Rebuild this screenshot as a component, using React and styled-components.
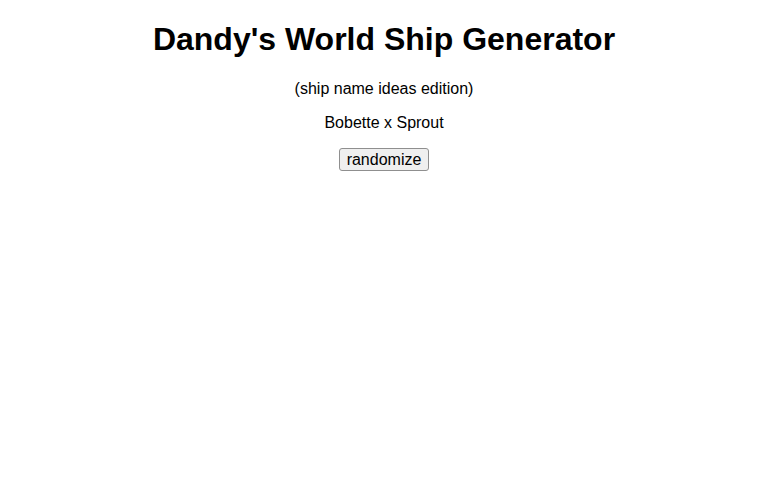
import React, { useState } from "react";
import styled, { createGlobalStyle } from "styled-components";

const Global = createGlobalStyle`
  body {
    margin: 0;
    background: #fff;
    color: #000;
    font-family: "Liberation Sans", Arial, sans-serif;
  }
`;

const Page = styled.main`
  padding: 0 8px;
  text-align: center;
`;

const Title = styled.h1`
  font-size: 32px;
  font-weight: bold;
  margin: 21.44px 0;
`;

const Line = styled.p`
  font-size: 16px;
  margin: 16px 0;
`;

const Actions = styled.div`
  text-align: center;
`;

const Button = styled.button`
  font-family: "Liberation Sans", Arial, sans-serif;
  font-size: 16px;
  line-height: 18px;
  color: #000;
  padding: 2px 7px 1px;
  background: #efefef;
  border: 1px solid #8f8f8f;
  border-radius: 3px;
  cursor: pointer;
  &:hover {
    background: #e5e5e5;
  }
`;

const characters = ["Bobette", "Sprout", "Astro", "Vee", "Pebble", "Shrimpo", "Poppy", "Goob", "Scraps", "Boxten", "Dandy"];

export default function App() {
  const [pair, setPair] = useState(["Bobette", "Sprout"]);

  const randomize = () => {
    const a = characters[Math.floor(Math.random() * characters.length)];
    let b = a;
    while (b === a) b = characters[Math.floor(Math.random() * characters.length)];
    setPair([a, b]);
  };

  return (
    <Page>
      <Global />
      <Title>Dandy's World Ship Generator</Title>
      <Line>(ship name ideas edition)</Line>
      <Line>
        {pair[0]} x {pair[1]}
      </Line>
      <Actions>
        <Button onClick={randomize}>randomize</Button>
      </Actions>
    </Page>
  );
}
